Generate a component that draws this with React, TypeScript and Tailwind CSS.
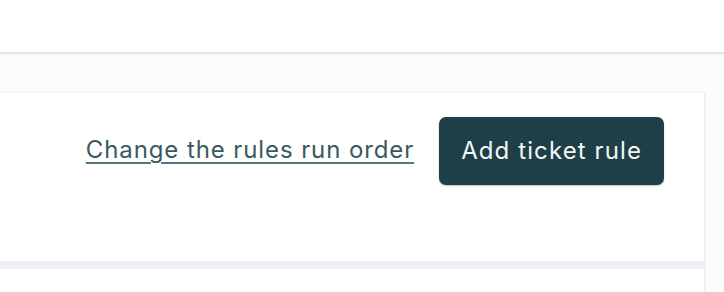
export default function App() {
  return (
    <div className="w-[724px] h-[292px] overflow-hidden bg-[#fcfcfc]" style={{ fontFamily: 'Inter, "Noto Sans", sans-serif' }}>
      {/* top bar */}
      <div className="h-[54px] bg-white border-b-2 border-[#e4e4e4] shadow-[0_1px_2px_rgba(0,0,0,0.04)]" />

      <div className="pt-[38px] w-[706px]">
        <div className="bg-white border-t border-[#f4f4f4] border-r-2 border-r-[#f1f1f1]">
          <div className="h-[168px] flex justify-end items-start pt-[24px] pr-[40px] gap-[25px]">
            <a
              href="#"
              className="mt-[18px] text-[24px] leading-[30px] tracking-[0.9px] text-[#3a5961] underline underline-offset-[4px] decoration-2 decoration-[#5b757c]"
            >
              Change the rules run order
            </a>
            <button className="h-[68px] px-[22px] rounded-[7px] bg-[#1e3e48] text-[#f4f6f6] text-[24px] tracking-[1.1px] shadow-[0_1px_2px_rgba(0,0,0,0.25)]">
              Add ticket rule
            </button>
          </div>
          <div className="h-[8px] bg-[#edf0f4]" />
          <div className="h-[40px] bg-white" />
        </div>
      </div>
    </div>
  );
}
